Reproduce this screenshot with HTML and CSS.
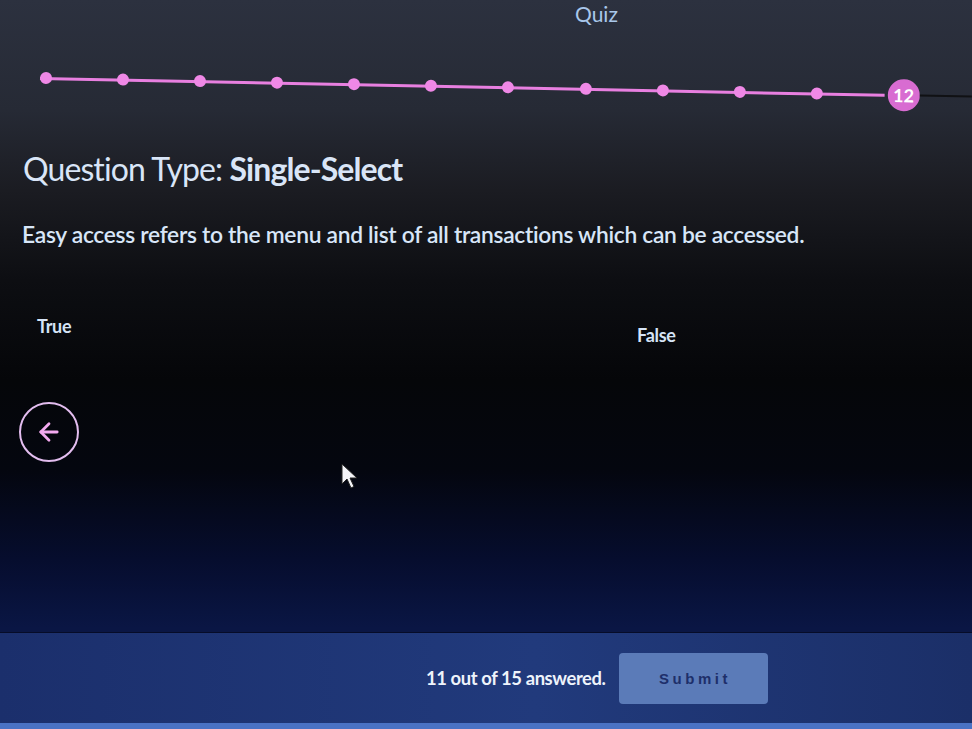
FILE: index.html
```html
<!DOCTYPE html>
<html>
<head>
<meta charset="utf-8">
<link rel="stylesheet" href="styles.css">
</head>
<body>
<div class="page">
  <header class="topbar">Quiz</header>
  <div class="stepper">
    <div class="track">
      <span class="dot"></span><span class="dot"></span><span class="dot"></span><span class="dot"></span>
      <span class="dot"></span><span class="dot"></span><span class="dot"></span><span class="dot"></span>
      <span class="dot"></span><span class="dot"></span><span class="dot"></span>
      <span class="current">12</span>
    </div>
    <div class="rest"></div>
  </div>
  <main class="question">
    <h1 class="qtype">Question Type: <b>Single-Select</b></h1>
    <p class="qtext">Easy access refers to the menu and list of all transactions which can be accessed.</p>
    <div class="options">
      <div class="opt opt-true">True</div>
      <div class="opt opt-false">False</div>
    </div>
    <button class="back" aria-label="Back">
      <svg width="28" height="28" viewBox="0 0 24 24" fill="none" stroke="#f3a9ef" stroke-width="2.4" stroke-linecap="round" stroke-linejoin="round"><path d="M19 12H5"/><path d="M12 19l-7-7 7-7"/></svg>
    </button>
    <svg class="cursor" width="18" height="26" viewBox="0 0 18 26"><path d="M1 1 L1 21 L6 16 L10 25 L13 23.5 L9 15 L16 15 Z" fill="#f4f4f8" stroke="#222" stroke-width="1"/></svg>
  </main>
  <footer class="footer">
    <span class="count">11 out of 15 answered.</span>
    <button class="submit">Submit</button>
  </footer>
  <div class="strip"></div>
</div>
</body>
</html>
```
FILE: styles.css
```css
* { box-sizing: border-box; }
html, body { margin: 0; padding: 0; }
body {
  width: 972px;
  height: 729px;
  overflow: hidden;
  font-family: Lato, "Open Sans", sans-serif;
  background: #000;
}
.page {
  width: 972px;
  height: 729px;
  display: flex;
  flex-direction: column;
  background: linear-gradient(180deg, #2c313f 0px, #262a35 110px, #1b1c22 190px, #0d0e12 280px, #050609 380px, #04060f 470px, #060d2e 560px, #0a1644 628px);
}
.topbar {
  height: 27px;
  padding-left: 575px;
  color: #a9c7ea;
  font-size: 21px;
  line-height: 27px;
}
.stepper {
  height: 100px;
  display: flex;
  align-items: center;
  padding-left: 40px;
  transform: rotate(1.15deg);
  transform-origin: 45px 50px;
  margin-top: 1px;
}
.track {
  width: 880px;
  display: flex;
  justify-content: space-between;
  align-items: center;
  background: linear-gradient(#e87fe0, #e87fe0) no-repeat left center / 96% 3px;
}
.dot {
  width: 12px;
  height: 12px;
  border-radius: 50%;
  background: #ef88e6;
}
.current {
  width: 32px;
  height: 32px;
  border-radius: 50%;
  background: #d86cd1;
  color: #fff;
  font-weight: 700;
  font-size: 18px;
  display: flex;
  align-items: center;
  justify-content: center;
}
.rest {
  flex: 1;
  height: 2px;
  background: #101114;
}
.question {
  position: relative;
  flex: 1;
  padding: 0 22px;
}
.qtype {
  margin: 21px 0 0 1px;
  font-size: 32px;
  line-height: 40px;
  font-weight: 400;
  color: #d9e5f7;
  letter-spacing: -0.9px;
}
.qtype b { font-weight: 700; }
.qtext {
  margin: 31px 0 0;
  font-size: 22.8px;
  line-height: 28px;
  font-weight: 600;
  color: #d8e6f8;
  letter-spacing: -0.3px;
}
.options {
  display: flex;
  margin-top: 67px;
  padding-left: 15px;
}
.opt {
  color: #d6e4f6;
  font-size: 18px;
  font-weight: 700;
  letter-spacing: -0.3px;
}
.opt-true { width: 600px; }
.opt-false { margin-top: 9px; }
.back {
  margin: 56px 0 0 -3px;
  width: 60px;
  height: 60px;
  border-radius: 50%;
  border: 2px solid #e3bdef;
  background: transparent;
  display: flex;
  align-items: center;
  justify-content: center;
  padding: 0;
}
.cursor {
  position: absolute;
  left: 341px;
  top: 335px;
}
.footer {
  height: 91px;
  display: flex;
  align-items: center;
  padding-left: 426px;
  gap: 13px;
  background: linear-gradient(90deg, #1b2f6c, #213a7c 55%, #1b2f68);
  border-top: 1px solid #060c28;
}
.count {
  color: #eef3fb;
  font-size: 18.4px;
  font-weight: 700;
  letter-spacing: -0.4px;
}
.submit {
  width: 149px;
  height: 51px;
  border: none;
  border-radius: 4px;
  background: #5b7bb8;
  color: #1e2f6a;
  font-family: "Liberation Sans", Arial, sans-serif;
  font-size: 15px;
  font-weight: 700;
  letter-spacing: 3.5px;
  padding: 0 0 0 4px;
}
.strip {
  height: 6px;
  background: #4a72c4;
}
```
